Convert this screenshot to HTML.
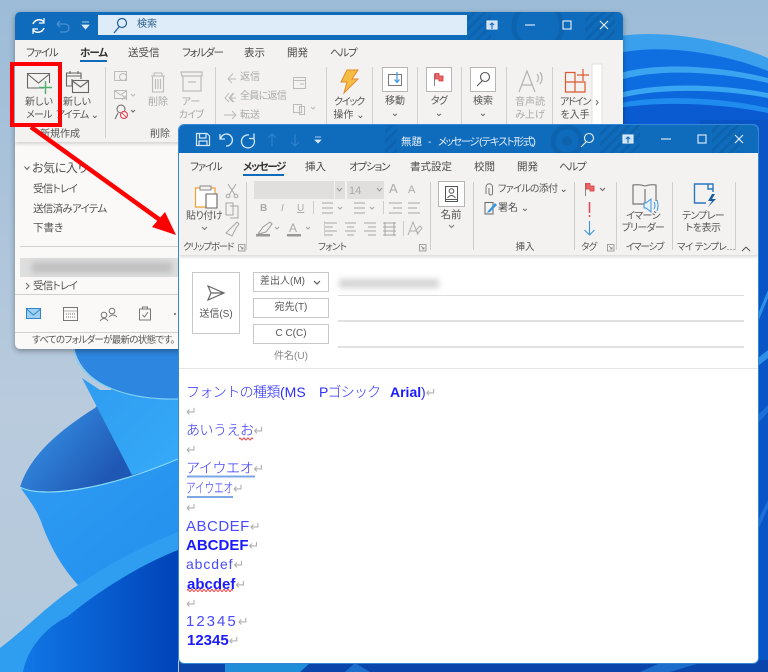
<!DOCTYPE html>
<html lang="ja"><head><meta charset="utf-8"><title>Outlook</title>
<style>
html,body{margin:0;padding:0;width:768px;height:672px;overflow:hidden;background:#a9c3da}
#p{position:absolute;left:0;top:0;width:768px;height:672px;overflow:hidden;filter:blur(.3px)}
.w{position:absolute;box-sizing:border-box}
.t{position:absolute;margin-top:1px;white-space:nowrap;font-family:"Liberation Sans","Noto Sans CJK JP",sans-serif;font-size:10px;line-height:12px;color:#555;font-feature-settings:"palt"}
.c{text-align:center;transform:translateX(-50%)}
.g{color:#aaa}
.n{font-size:10.5px;color:#4a4a4a}
.k{letter-spacing:-1.2px}
.m{letter-spacing:-.7px}
.b{position:absolute;white-space:nowrap;font-family:"Liberation Sans","Noto Sans CJK JP",sans-serif;font-size:14px;font-weight:300;line-height:19px;color:#2e2eff;left:186px}
.r{font-family:"DejaVu Sans",sans-serif;color:#b0b0b0;font-size:13px;font-weight:normal;letter-spacing:0}
.bx{position:absolute;box-sizing:border-box;border:1px solid #c8c8c8;background:#fff}
svg{position:absolute;left:0;top:0}
</style></head><body><div id="p">

<svg width="768" height="672" viewBox="0 0 768 672">
<defs>
<linearGradient id="bg" x1="0" y1="0" x2="0" y2="1"><stop offset="0" stop-color="#9dbcd8"/><stop offset=".6" stop-color="#b9cbdd"/><stop offset="1" stop-color="#b4c9dc"/></linearGradient>
<linearGradient id="f1" x1="0" y1="0" x2="1" y2="1"><stop offset="0" stop-color="#2f9cf0"/><stop offset="1" stop-color="#36aaf8"/></linearGradient>
<linearGradient id="f2" x1="0" y1=".2" x2="1" y2=".8"><stop offset="0" stop-color="#3b9cf0"/><stop offset=".7" stop-color="#1f58b4"/></linearGradient>
<linearGradient id="f3" x1="0" y1="0" x2="1" y2="1"><stop offset="0" stop-color="#2f9bf2"/><stop offset="1" stop-color="#2290ee"/></linearGradient>
<linearGradient id="f4" x1="0" y1="0" x2="1" y2="0"><stop offset="0" stop-color="#1177e6"/><stop offset="1" stop-color="#0043b8"/></linearGradient>
</defs>
<rect width="768" height="672" fill="url(#bg)"/>
<!-- right waves -->
<path d="M620 36C660 30 720 38 768 58V130H620Z" fill="#3aa0ee"/>
<path d="M620 53C660 44 720 52 768 71V130H620Z" fill="#0f6fe0"/>
<path d="M620 73C660 62 720 66 768 78V130H620Z" fill="#3ba4f0"/>
<path d="M620 80C660 68 720 72 768 83V130H620Z" fill="#0d6ce0"/>
<path d="M620 93C660 82 720 84 768 93V130H620Z" fill="#3aa5f2"/>
<path d="M620 98C660 88 720 89 768 98V130H620Z" fill="#0c66dc"/>
<path d="M620 103C660 95 720 97 768 108V130H620Z" fill="#1f8bee"/>
<path d="M620 108C660 101 720 103 768 113V130H620Z" fill="#0a5bd2"/>
<rect x="700" y="120" width="68" height="552" fill="#0a55c6"/>
<path d="M758 314L768 290V298L758 322Z" fill="#2d8fe8"/>
<path d="M758 358L768 350V358L758 366Z" fill="#2d8fe8"/>
<path d="M758 415L768 405V412L758 423Z" fill="#1c6ed8"/>
<path d="M758 520L768 500V508L758 530Z" fill="#1c6ed8"/>
<!-- left flowers -->
<path d="M95 408C60 430 30 455 20 487C40 498 100 492 178 459V380H120Z" fill="url(#f2)"/>
<path d="M82 378L132 475C150 470 165 465 178 459V390H100Z" fill="url(#f1)"/>
<path d="M74 345C78 380 120 400 178 399V345Z" fill="#2d86df"/>
<path d="M74 350C78 380 120 400 178 399" fill="none" stroke="#7fd0f5" stroke-width="1.2"/>
<path d="M20 487C40 498 100 492 178 459V540L78 585C60 565 50 545 43 527C38 512 33 505 20 487Z" fill="url(#f3)"/>
<path d="M20 487C40 498 100 492 178 459" fill="none" stroke="#8adcf8" stroke-width="1.2"/>
<path d="M0 648C30 625 50 603 78 585C110 563 145 545 178 532V672H0Z" fill="#2f9ef0"/>
<path d="M23 672C28 645 50 625 67 617C100 590 140 565 178 550V672Z" fill="url(#f4)"/>
<rect x="179" y="660" width="590" height="12" fill="#0a45ac"/>
<path d="M225 663H310L300 672H225Z" fill="#1f8dd8"/>
<path d="M355 663L370 672H345Z" fill="#1c70cc"/>
<path d="M660 663L700 663L670 672H640Z" fill="#1c6ccc"/>
</svg>

<!-- Main window -->
<div class="w" style="left:15px;top:12px;width:608px;height:337px;background:#faf9f8;border-radius:5px;box-shadow:0 2px 6px rgba(0,0,0,.35);overflow:hidden">
 <div class="w" style="left:0;top:0;width:608px;height:28px;background:#0f6cbd"></div>
 <div class="w" style="left:0;top:28px;width:608px;height:102px;background:#f3f2f1;box-shadow:0 2px 3px rgba(0,0,0,.15)"></div>
</div>
<svg width="768" height="672" viewBox="0 0 768 672">
<defs>
<pattern id="st" width="7" height="7" patternUnits="userSpaceOnUse" patternTransform="rotate(45)"><rect width="3" height="7" fill="#0e63ae"/></pattern>
<clipPath id="c1"><rect x="15" y="12" width="608" height="28"/></clipPath>
<clipPath id="c2"><rect x="179" y="125" width="579" height="28"/></clipPath>
</defs>
<g clip-path="url(#c1)">
<rect x="467" y="12" width="24" height="28" fill="url(#st)"/>
<circle cx="538" cy="26" r="24" fill="none" stroke="#0e63ae" stroke-width="5"/>
<rect x="585" y="12" width="30" height="28" fill="url(#st)"/>
</g>
<rect x="98" y="15" width="369" height="20" fill="#deecf9"/>
<g fill="none" stroke="#fff" stroke-width="1.2">
<path d="M33 24A6.5 6.5 0 0 1 44 22M44 28A6.5 6.5 0 0 1 33 30" stroke-width="1.5"/>
<path d="M44 18V23H39M33 34V29H38" stroke-width="1.2"/>
</g>
<path d="M57 24H65A4 4 0 0 1 65 32H60M57 24L60 21M57 24L60 27" fill="none" stroke="#4b8fce" stroke-width="1.3"/>
<path d="M82 22H89M82 25L85.5 29L89 25Z" fill="#dbe9f6" stroke="#dbe9f6" stroke-width=".8"/>
<g fill="none" stroke="#1a5e9e" stroke-width="1.2"><circle cx="122" cy="23" r="4.5"/><path d="M119 27L114 33"/></g>
<g fill="none" stroke="#e8f1f9" stroke-width="1.1">
<rect x="487" y="21" width="10" height="8" fill="#cfe2f3"/><path d="M492 29V23M490 25L492 23L494 25" stroke="#0f6cbd"/>
<path d="M525 25H535"/><rect x="563" y="21" width="8" height="8"/><path d="M600 21L608 29M608 21L600 29"/>
</g>
<!-- separators main -->
<g stroke="#d2d0ce" stroke-width="1">
<path d="M105.500 67V138M215.500 67V138M326.500 67V138M372.500 67V138M417.500 67V138M461.500 67V138M506.500 67V138M552.500 67V138"/>
<path d="M20 246.500H178M15 294.500H179M15 332.500H179"/>
</g>
<!-- new mail -->
<g fill="none" stroke="#666" stroke-width="1.1">
<path d="M44 88H27.500V73.500H49.500V83"/><path d="M27.500 74L38.500 83L49.500 74"/>
<path d="M72 79V86H66.500V73H81V79M66.500 76H81M70 71V74M78 71V74"/>
<rect x="72.500" y="80.500" width="16" height="12" fill="#f3f2f1"/><path d="M72.500 81L80.500 87L88.500 81"/>
</g>
<path d="M45.500 81V94M39 87.500H52" stroke="#4caf6a" stroke-width="1.4"/>
<!-- delete group -->
<g fill="none" stroke="#bdbbb9" stroke-width="1">
<rect x="114.500" y="71.500" width="12" height="9"/><circle cx="123" cy="77" r="3.500"/>
<rect x="114.500" y="90.500" width="12" height="8"/><path d="M115 91L120.500 95L126 91M122 95L127 100M127 95L122 100M131 94L133 96L135 94"/>
<path d="M151 76H165M154 76V73H162V76M152.500 76V92H163.500V76M155.500 79V89M158 79V89M160.500 79V89" stroke-width="1.1"/>
<path d="M182 76H202V72H181ZM183 76V91H201V76M188 82H196" stroke-width="1.2"/>
<path d="M236 79H228M228 79L233 73.500M228 79L232 83"/>
<path d="M236 98H230L234 93M230 98L234 102M229 98L233 93M229 98L233 102M225 98L229 93M225 98L229 102"/>
<path d="M224 115H236M236 115L232 111M236 115L232 119"/>
<rect x="293.500" y="77.500" width="12" height="11"/><path d="M293.500 80.500H305.500M300 84H304"/>
<rect x="293.500" y="104.500" width="8" height="8"/><rect x="299.500" y="106.500" width="5" height="8"/>
<path d="M311 107L313 109L315 107"/>
</g>
<g fill="none" stroke="#666" stroke-width="1"><circle cx="121" cy="109" r="4"/><path d="M118 113L115 119M131 110L133 112L135 110"/></g>
<circle cx="124" cy="115" r="3.500" fill="#fff" stroke="#e3485a" stroke-width="1.2"/><path d="M122 113L126 117" stroke="#e3485a"/>
<path d="M347 70H358L352 79H358L344 93L347 82H341Z" fill="#f6bd45" stroke="#e38a2a" stroke-width="1"/>
<!-- boxes -->
<g fill="#fff" stroke="#b8b6b4"><rect x="382.500" y="67.500" width="25" height="24"/><rect x="426.500" y="67.500" width="25" height="24"/><rect x="470.500" y="67.500" width="25" height="24"/></g>
<path d="M388.500 74.500H401.500V85.500H388.500Z" fill="none" stroke="#777"/><path d="M397 72V82M394.500 79.500L397 82.500L399.500 79.500" fill="none" stroke="#3a96dd" stroke-width="1.200"/>
<path d="M434.500 74V86" stroke="#888"/><path d="M435 73.500H439V76H443V81H439V79H435Z" fill="#ea6a6a" stroke="#d13438" stroke-width=".8"/>
<g fill="none" stroke="#555" stroke-width="1.100"><circle cx="485" cy="77" r="4.500"/><path d="M482 81L477 86"/></g>
<g fill="none" stroke="#b5b3b1" stroke-width="1.200"><path d="M519 92L527 71L535 92M522 85H532"/><path d="M537 74Q540 78 537 82M540 72Q544 78 540 84"/></g>
<g fill="none" stroke="#d95b30" stroke-width="1.200"><path d="M565.500 72.500H575V92H565.500ZM575 82H585V92H575ZM565.500 82H575M577 75H589M583 69V81"/></g>
<rect x="592" y="64" width="10" height="61" fill="#fff" stroke="#e2e0de"/>
<path d="M596 100L598 102.500L596 105" fill="none" stroke="#666"/>
<!-- nav -->
<g fill="none" stroke="#777" stroke-width="1">
<rect x="26.500" y="308.500" width="14" height="10" fill="#9fd0f2" stroke="#2f86cf"/><path d="M26.500 309L33.500 315L40.500 309" stroke="#2f86cf"/>
<rect x="63.500" y="307.500" width="14" height="13"/><path d="M63.500 311H77.500M66 314H75M66 317H75" stroke-dasharray="1 1"/>
<circle cx="104" cy="315" r="2.800"/><path d="M100 321Q104 316 108 321"/><circle cx="112" cy="311" r="2.800"/><path d="M109 317Q113 313 117 317"/>
<path d="M139.500 309H150.500V320H139.500ZM142.500 309V307H147.500V309M142.500 315L144.500 317L148 312"/>
</g><circle cx="175" cy="314" r="1" fill="#666"/>
<g fill="none" stroke="#666" stroke-width="1"><path d="M24.500 166.500L27 169.500L29.500 166.500M26 283L29 286L26 289M24.500 266L27 269L29.500 266"/></g>
</svg>
<div class="w" style="left:20px;top:258px;width:158px;height:19px;background:#dedede"></div>
<div class="w" style="left:32px;top:262px;width:140px;height:11px;background:#c0c0c0;filter:blur(3px)"></div>
<span class="t n k" style="left:26px;top:46px">ファイル</span><span class="t n" style="left:80px;top:46px;font-weight:700;color:#333;letter-spacing:-1px">ホーム</span>
<span class="t n" style="left:128px;top:46px">送受信</span><span class="t n k" style="left:182px;top:46px">フォルダー</span><span class="t n" style="left:244px;top:46px">表示</span><span class="t n" style="left:287px;top:46px">開発</span><span class="t n k" style="left:330px;top:46px">ヘルプ</span>
<div class="w" style="left:80px;top:60px;width:27px;height:2px;background:#0f6cbd"></div>
<span class="t" style="left:137px;top:18px;color:#2b5f8f">検索</span>
<span class="t c" style="left:39px;top:96px">新しい</span><span class="t c m" style="left:39px;top:109px">メール</span>
<span class="t c" style="left:77px;top:96px">新しい</span><span class="t c m" style="left:77px;top:109px">アイテム ⌄</span>
<span class="t c" style="left:60px;top:128px">新規作成</span><span class="t c" style="left:160px;top:128px">削除</span>
<span class="t g c" style="left:158px;top:96px">削除</span><span class="t g c" style="left:191px;top:96px">アー</span><span class="t g c m" style="left:191px;top:109px">カイブ</span>
<span class="t g" style="left:240px;top:71px">返信</span><span class="t g m" style="left:240px;top:90px">全員に返信</span><span class="t g" style="left:240px;top:109px">転送</span>
<span class="t c k" style="left:349px;top:96px">クイック</span><span class="t c" style="left:349px;top:109px">操作 ⌄</span>
<span class="t c" style="left:395px;top:95px">移動</span><span class="t c" style="left:395px;top:107px">⌄</span><span class="t c m" style="left:439px;top:95px">タグ</span><span class="t c" style="left:439px;top:107px">⌄</span><span class="t c" style="left:483px;top:95px">検索</span><span class="t c" style="left:483px;top:107px">⌄</span>
<span class="t g c" style="left:530px;top:96px">音声読</span><span class="t g c" style="left:530px;top:109px">み上げ</span><span class="t c k" style="left:575px;top:96px">アドイン</span><span class="t c" style="left:575px;top:109px">を入手</span>
<span class="t" style="left:32px;top:160px;font-size:12px;line-height:14px;letter-spacing:-.4px">お気に入り</span>
<span class="t m" style="left:33px;top:182px;font-size:10.500px">受信トレイ</span><span class="t m" style="left:33px;top:202px;font-size:10.500px">送信済みアイテム</span><span class="t" style="left:33px;top:221px;font-size:10.500px">下書き</span><span class="t m" style="left:33px;top:279px;font-size:10.500px">受信トレイ</span>
<span class="t" style="left:32px;top:334px;font-size:9.500px;letter-spacing:-.7px">すべてのフォルダーが最新の状態です。</span>

<!-- Arrow + red box -->
<svg width="768" height="672" viewBox="0 0 768 672">
<rect x="12" y="64" width="48" height="61" fill="none" stroke="#f00" stroke-width="4"/>
<path d="M31 127L160 220" stroke="#f00" stroke-width="4.500"/>
<path d="M176 235L152 227L165 212Z" fill="#f00"/>
</svg>

<!-- Message window -->
<div class="w" style="left:179px;top:125px;width:579px;height:538px;background:#fff;border-radius:5px;box-shadow:0 0 0 1px #3388d8;overflow:hidden">
 <div class="w" style="left:0;top:0;width:579px;height:28px;background:#0f6cbd"></div>
 <div class="w" style="left:0;top:28px;width:579px;height:102px;background:#f3f2f1;box-shadow:0 2px 3px rgba(0,0,0,.15)"></div>
</div>
<div class="w" style="left:254px;top:181px;width:91px;height:18px;background:#e1dfdd"></div>
<div class="w" style="left:334px;top:181px;width:1px;height:18px;background:#f3f2f1"></div>
<div class="w" style="left:347px;top:181px;width:37px;height:18px;background:#e1dfdd"></div>
<div class="bx" style="left:438px;top:181px;width:27px;height:26px;border-color:#b8b6b4"></div>
<div class="bx" style="left:192px;top:272px;width:48px;height:62px"></div>
<div class="bx" style="left:253px;top:272px;width:76px;height:20px"></div>
<div class="bx" style="left:253px;top:298px;width:76px;height:20px"></div>
<div class="bx" style="left:253px;top:324px;width:76px;height:20px"></div>
<div class="w" style="left:339px;top:279px;width:100px;height:9px;background:#d4d4d4;filter:blur(3px)"></div>
<svg width="768" height="672" viewBox="0 0 768 672">
<defs><pattern id="st2" width="7" height="7" patternUnits="userSpaceOnUse" patternTransform="rotate(45)"><rect width="3" height="7" fill="#0e63ae"/></pattern></defs>
<g clip-path="url(#c2)">
<rect x="600" y="125" width="40" height="28" fill="url(#st2)"/>
<circle cx="567" cy="141" r="5" fill="#0e63ae"/><circle cx="567" cy="141" r="14" fill="none" stroke="#0e63ae" stroke-width="5"/>
<rect x="712" y="125" width="28" height="28" fill="url(#st2)"/>
<rect x="385" y="125" width="12" height="28" fill="url(#st2)"/>
</g>
<g fill="none" stroke="#d6e7f7" stroke-width="1.200">
<path d="M196.500 133.500H207L209.500 136V145.500H196.500ZM199.500 133.500V138H206V133.500M199 145.500V141H207V145.500"/>
<path d="M220 134V139H225M220.500 139A6 6 0 1 1 226 146" stroke-width="1.300"/>
<path d="M254 133.500V138.500H249M254 139A6.500 6.500 0 1 1 249 135" stroke-width="1.300"/>
</g>
<path d="M272 146V134M268 138L272 134L276 138M295 134V146M291 142L295 146L299 142" fill="none" stroke="#2f82cc" stroke-width="1.200"/>
<path d="M315 137H321M315 140L318 143L321 140Z" fill="#dbe9f6" stroke="#dbe9f6" stroke-width=".7"/>
<g fill="none" stroke="#e8f1f9" stroke-width="1.100">
<circle cx="589" cy="138" r="4.500"/><path d="M586 142L581 147"/>
<rect x="623" y="135" width="10" height="8" fill="#cfe2f3"/><path d="M628 143V137M626 139L628 137L630 139" stroke="#0f6cbd"/>
<path d="M661 139H671"/><rect x="698" y="135" width="8" height="8"/><path d="M735 135L743 143M743 135L735 143"/>
</g>
<!-- separators -->
<g stroke="#cfcdcb"><path d="M246.500 182V250M430.500 182V250M473.500 182V250M574.500 182V250M616.500 182V250M672.500 182V250M735.500 182V250M313.500 201V214M383.500 201V214M324.500 221V236M403.500 221V236"/></g>
<!-- paste -->
<path d="M195.500 188H215V207H195.500Z" fill="#fff" stroke="#f0a030" stroke-width="1.200"/><path d="M200 186H211V190H200Z" fill="#f3f2f1" stroke="#888"/>
<path d="M206 194H217V208H206Z" fill="#fff" stroke="#666" stroke-width="1.100"/>
<g fill="none" stroke="#a8a6a4" stroke-width="1">
<path d="M228 184L235 195M236 184L229 195"/><circle cx="228" cy="196" r="1.800"/><circle cx="236" cy="196" r="1.800"/>
<path d="M226 203H233V215H226ZM230 206H238V218H230"/>
<path d="M237 222L229 230L226 233L232 236L236 228L239 224Z"/>
</g>
<g fill="none" stroke="#a8a6a4" stroke-width="1">
<path d="M322 203H333M322 208H333M322 213H333M354 203H365M354 208H365M354 213H365"/>
<path d="M338 207L340 209L342 207M370 207L372 209L374 207"/>
<path d="M389 203H402M393 208H402M389 213H402M408 203H420M408 208H417M408 213H420"/>
<path d="M325 223H337M325 227H333M325 231H337M325 235H333M345 223H356M347 227H354M345 231H356M347 235H354M364 223H376M368 227H376M364 231H376M368 235H376M383 223H396M383 227H396M383 231H396M383 235H396M385 222V236M394 222V236"/>
<path d="M275 227L277 229L279 227M306 227L308 229L310 227"/>
</g>
<path d="M258 234L263 227L270 222L272 224L266 232L259 234Z" fill="none" stroke="#999"/><rect x="256" y="234" width="14" height="2.500" fill="#999"/>
<rect x="287" y="234" width="14" height="2.500" fill="#999"/>
<path d="M408 235L413 222L418 235M410 231H416" fill="none" stroke="#b0aeac"/><path d="M416 230L420 226L422 228L418 233Z" fill="none" stroke="#b0aeac"/>
<!-- name -->
<g fill="none" stroke="#555" stroke-width="1"><rect x="445.500" y="186.500" width="12" height="15"/><circle cx="451.500" cy="191" r="2.300"/><path d="M447.500 198Q451.500 193 455.500 198M446 199.500H457"/></g>
<!-- attach -->
<path d="M489 187V193A2 2 0 0 0 492.500 193V186A3 3 0 0 0 486 186V193" fill="none" stroke="#777" stroke-width="1" transform="translate(0 1)"/>
<path d="M485 202.500H493V214H485Z" fill="none" stroke="#666"/><path d="M488 211L495 203L497 205L490 212L487 213Z" fill="#3a96dd"/>
<path d="M585.500 183V196" stroke="#888"/><path d="M586 183.500H590V186H594V191H590V189H586Z" fill="#ea6a6a" stroke="#d13438" stroke-width=".8"/>
<path d="M600 188L602.500 190.500L605 188" fill="none" stroke="#666"/>
<path d="M589.500 202V213" stroke="#e3485a" stroke-width="1.600"/><circle cx="589.500" cy="216" r="1" fill="#e3485a"/>
<path d="M589.500 221V235M584.500 230L589.500 235L594.500 230" fill="none" stroke="#3a96dd" stroke-width="1.100"/>
<g fill="none" stroke="#777" stroke-width="1.200"><path d="M645 189V204M645 186Q640 184 633 185V204H645M645 186Q650 184 656 185V201"/></g>
<path d="M646 203L651 199V212L646 208H644V203Z" fill="#e6f2fb" stroke="#3a96dd"/><path d="M654 202Q656 205.500 654 209M657 200Q659 205.500 657 211" fill="none" stroke="#3a96dd"/>
<path d="M713 192V184H700L694.500 184V203H706M708 184V189H713" fill="none" stroke="#2878c0" stroke-width="1.400"/>
<path d="M712 194L708 201H712L708 207L716 199H712L715 194Z" fill="#1a5e9e"/>
<!-- send -->
<path d="M208 286L224 293L208 300L211 293ZM211 293H224" fill="none" stroke="#666" stroke-width="1.200"/>
<path d="M314 281L317 284L320 281" fill="none" stroke="#555" stroke-width="1.200"/>
<g stroke="#dcdcdc"><path d="M338 295.500H744"/></g>
<g stroke="#cfcfcf" stroke-width="1.200"><path d="M338 321H744M338 347H744"/></g>
<path d="M179 368.500H758" stroke="#e6e6e6"/>
<path d="M746 247L750 251M746 247L742 251" stroke="#555" stroke-width="1"/>
<g fill="none" stroke="#888" stroke-width=".8"><path d="M238.500 244.500H245V251H238.500ZM240 246L243 249M243 247V249H241M419.500 244.500H426V251H419.500ZM421 246L424 249M424 247V249H422M607.500 244.500H614V251H607.500ZM609 246L612 249M612 247V249H610"/></g>
<g fill="none" stroke="#999" stroke-width="1"><path d="M337 188L339.500 191L342 188M377 188L379.500 191L382 188"/></g>
<g fill="none" stroke="#777" stroke-width="1"><path d="M202 227L204.500 229.500L207 227M449 225L451.500 227.500L454 225"/></g>
<!-- spell + underlines -->
<path d="M239 439q1-2 2 0t2 0t2 0t2 0t2 0t2 0t2 0M187 590.500q1-2 2 0t2 0t2 0t2 0t2 0t2 0t2 0t2 0t2 0t2 0t2 0t2 0t2 0t2 0t2 0t2 0t2 0t2 0t2 0t2 0t2 0t2 0t2 0" fill="none" stroke="#e33" stroke-width=".9"/>
<path d="M187 476.500H255M187 497H233" stroke="#7ea6e4" stroke-width="2"/>
</svg>
<span class="t n k" style="left:190px;top:160px">ファイル</span><span class="t n" style="left:243px;top:160px;font-weight:700;color:#333;letter-spacing:-1.300px">メッセージ</span>
<span class="t n" style="left:305px;top:160px">挿入</span><span class="t n k" style="left:349px;top:160px">オプション</span><span class="t n" style="left:410px;top:160px">書式設定</span><span class="t n" style="left:474px;top:160px">校閲</span><span class="t n" style="left:517px;top:160px">開発</span><span class="t n k" style="left:559px;top:160px">ヘルプ</span>
<div class="w" style="left:243px;top:174px;width:41px;height:2px;background:#0f6cbd"></div>
<span class="t" style="left:401px;top:135px;color:#e4effa;font-size:10.500px">無題</span><span class="t" style="left:428px;top:135px;color:#e4effa;font-size:10.500px">-</span><span class="t" style="left:438px;top:135px;color:#e4effa;font-size:10.500px;letter-spacing:-1.600px">メッセージ</span><span class="t" style="left:479px;top:135px;color:#e4effa;font-size:10.500px;letter-spacing:-1.100px">(テキスト形式)</span>
<span class="t c" style="left:204px;top:210px;letter-spacing:-.5px">貼り付け</span>
<span class="t g" style="left:349px;top:184px;font-size:11px">14</span>
<span class="t g" style="left:389px;top:181px;font-size:13px;line-height:14px">A</span><span class="t g" style="left:408px;top:182px;font-size:11px;line-height:14px">A</span>
<span class="t g" style="left:260px;top:202px;font-weight:700">B</span><span class="t g" style="left:281px;top:202px;font-style:italic">I</span><span class="t g" style="left:297px;top:202px;text-decoration:underline">U</span>
<span class="t g" style="left:289px;top:221px;font-size:12px">A</span>
<span class="t c" style="left:451px;top:208px;font-size:10.500px">名前</span>
<span class="t m" style="left:498px;top:183px">ファイルの添付 ⌄</span><span class="t" style="left:498px;top:202px">署名 ⌄</span>
<span class="t c m" style="left:643px;top:210px">イマーシ</span><span class="t c m" style="left:643px;top:222px">ブリーダー</span>
<span class="t c m" style="left:703px;top:210px">テンプレー</span><span class="t c" style="left:703px;top:222px;letter-spacing:-.5px">トを表示</span>
<span class="t k" style="left:183px;top:241px;font-size:9.500px">クリップボード</span><span class="t m" style="left:318px;top:241px;font-size:9.500px">フォント</span><span class="t c" style="left:525px;top:241px;font-size:9.500px">挿入</span><span class="t m" style="left:581px;top:241px;font-size:9.500px">タグ</span><span class="t k" style="left:626px;top:241px;font-size:9.500px">イマーシブ</span><span class="t" style="left:677px;top:241px;font-size:9.500px;letter-spacing:-.6px">マイ テンプレ…</span>
<span class="t c" style="left:216px;top:308px">送信(S)</span>
<span class="t" style="left:260px;top:275px">差出人(M)</span><span class="t c" style="left:291px;top:301px">宛先(T)</span><span class="t c" style="left:291px;top:327px">C C(C)</span><span class="t g c" style="left:291px;top:350px;color:#888">件名(U)</span>

<!-- Body text -->
<div class="b" style="top:383px;letter-spacing:-.6px">フォントの種類</div>
<div class="b" style="top:383px;left:280px">(MS</div>
<div class="b" style="top:383px;left:319px;letter-spacing:-.8px">Pゴシック</div>
<div class="b" style="top:383px;left:390px;font-weight:700;color:#1a1aff">Arial</div>
<div class="b" style="top:383px;left:421px">)<span class="r">↵</span></div>
<div class="b" style="top:402px"><span class="r">↵</span></div>
<div class="b" style="top:421px;letter-spacing:-.5px">あいうえお<span class="r">↵</span></div>
<div class="b" style="top:440px"><span class="r">↵</span></div>
<div class="b" style="top:459px;letter-spacing:-.4px">アイウエオ<span class="r">↵</span></div>
<div class="b" style="top:479px"><span style="display:inline-block;width:47px;transform:scaleX(.68);transform-origin:0 50%">アイウエオ</span><span class="r">↵</span></div>
<div class="b" style="top:498px"><span class="r">↵</span></div>
<div class="b" style="top:517px;font-size:15px;letter-spacing:.5px;font-weight:400;color:#4a4aff">ABCDEF<span class="r">↵</span></div>
<div class="b" style="top:536px;font-size:15px;font-weight:700;color:#1a1aff">ABCDEF<span class="r">↵</span></div>
<div class="b" style="top:555px;font-size:14px;letter-spacing:.9px;font-weight:400;color:#4a4aff">abcdef<span class="r">↵</span></div>
<div class="b" style="top:575px;font-size:15px;font-weight:700;color:#1a1aff;left:187px">abcdef<span class="r">↵</span></div>
<div class="b" style="top:594px"><span class="r">↵</span></div>
<div class="b" style="top:612px;font-size:15px;letter-spacing:2px;font-weight:400;color:#4a4aff">12345<span class="r">↵</span></div>
<div class="b" style="top:631px;font-size:15px;font-weight:700;color:#1a1aff;left:187px">12345<span class="r">↵</span></div>
</div></body></html>
